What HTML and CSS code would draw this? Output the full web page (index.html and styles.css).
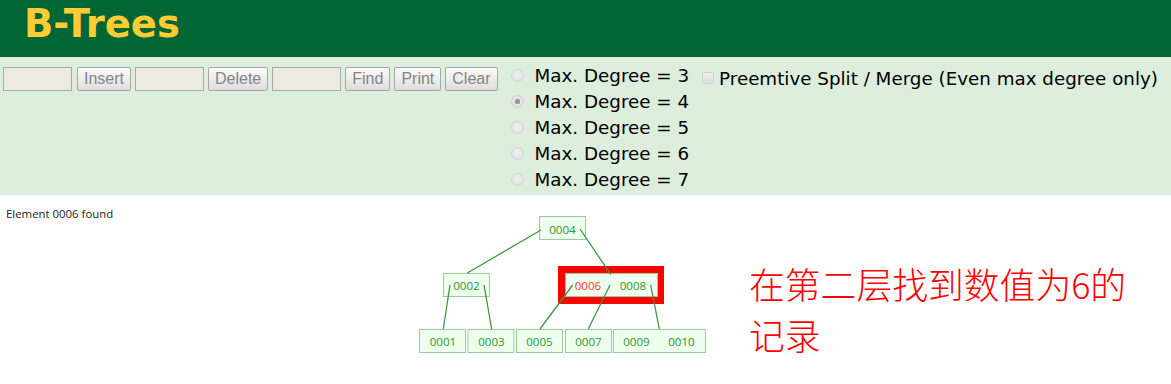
FILE: index.html
```html
<!DOCTYPE html>
<html lang="en">
<head>
<meta charset="utf-8">
<title>B-Trees</title>
<link rel="stylesheet" href="styles.css">
</head>
<body>
<header class="top">
  <h1 class="title">B-Trees</h1>
</header>
<section class="panel">
  <div class="ops">
    <input class="field first" type="text">
    <button class="btn">Insert</button>
    <input class="field" type="text">
    <button class="btn">Delete</button>
    <input class="field" type="text">
    <button class="btn">Find</button>
    <button class="btn">Print</button>
    <button class="btn">Clear</button>
  </div>
  <div class="degrees">
    <label class="opt"><input class="radio" type="radio" name="deg"><span>Max. Degree = 3</span></label>
    <label class="opt"><input class="radio" type="radio" name="deg" checked><span>Max. Degree = 4</span></label>
    <label class="opt"><input class="radio" type="radio" name="deg"><span>Max. Degree = 5</span></label>
    <label class="opt"><input class="radio" type="radio" name="deg"><span>Max. Degree = 6</span></label>
    <label class="opt"><input class="radio" type="radio" name="deg"><span>Max. Degree = 7</span></label>
  </div>
  <label class="preempt"><input class="check" type="checkbox"><span>Preemtive Split / Merge (Even max degree only)</span></label>
</section>
<section class="canvas">
  <p class="msg">Element 0006 found</p>
  <svg class="tree" width="1171" height="189" viewBox="0 0 1171 189" xmlns="http://www.w3.org/2000/svg">
    <rect class="hit" x="558" y="71" width="106" height="38"/>
    <rect class="node" x="539.5" y="21.5" width="46" height="23"/>
    <rect class="node" x="443.5" y="78.5" width="46" height="23"/>
    <rect class="node" x="565.5" y="78.5" width="92" height="23"/>
    <rect class="node" x="419.5" y="134.5" width="46" height="23"/>
    <rect class="node" x="468" y="134.5" width="46" height="23"/>
    <rect class="node" x="516.5" y="134.5" width="46" height="23"/>
    <rect class="node" x="565.5" y="134.5" width="46" height="23"/>
    <rect class="node" x="613.5" y="134.5" width="92" height="23"/>
    <text class="key" x="562.5" y="39">0004</text>
    <text class="key" x="466.5" y="94.5">0002</text>
    <text class="key found" x="588" y="94.5">0006</text>
    <text class="key" x="633" y="94.5">0008</text>
    <text class="key" x="443" y="151">0001</text>
    <text class="key" x="491.5" y="151">0003</text>
    <text class="key" x="539.5" y="151">0005</text>
    <text class="key" x="588.5" y="151">0007</text>
    <text class="key" x="636.5" y="151">0009</text>
    <text class="key" x="681.5" y="151">0010</text>
    <line class="edge" x1="541" y1="35" x2="467.3" y2="78"/>
    <line class="edge" x1="580" y1="34" x2="610.7" y2="79.3"/>
    <line class="edge" x1="450" y1="90" x2="443.3" y2="134"/>
    <line class="edge" x1="484" y1="90" x2="491.7" y2="134"/>
    <line class="edge" x1="572.7" y1="90" x2="540" y2="134"/>
    <line class="edge" x1="610" y1="90" x2="588.3" y2="134"/>
    <line class="edge" x1="650.7" y1="90" x2="659.3" y2="134"/>
  </svg>
  <div class="note">在第二层找到数值为6的记录</div>
</section>
</body>
</html>
```

FILE: styles.css
```css
html, body {
  margin: 0;
  padding: 0;
  background: #ffffff;
}

.top {
  height: 57px;
  background: #006633;
  box-sizing: border-box;
  padding-left: 24px;
}

.title {
  margin: 0;
  font-family: "DejaVu Sans", Verdana, sans-serif;
  font-weight: bold;
  font-size: 38.5px;
  line-height: 47px;
  color: #ffcc33;
}

.panel {
  height: 138px;
  background: #ddeedd;
  display: flex;
  align-items: flex-start;
  box-sizing: border-box;
}

.ops {
  display: flex;
  gap: 4px;
  margin-left: 3px;
  margin-top: 10px;
}

.field {
  width: 69px;
  height: 24px;
  box-sizing: border-box;
  margin: 0;
  border: 1px solid #a9a9a9;
  background: #ebebe4;
  padding: 0 3px;
}

.field.first {
  margin-right: 1px;
}

.btn {
  height: 24px;
  box-sizing: border-box;
  margin: 0;
  padding: 0 6px;
  border: 1px solid #a6a6a6;
  border-radius: 2px;
  background: linear-gradient(#fbfbfb, #dedede);
  font-family: "Liberation Sans", Arial, sans-serif;
  font-size: 16px;
  line-height: 22px;
  color: #858585;
}

.degrees {
  display: flex;
  flex-direction: column;
  margin-left: 13px;
  margin-top: 5px;
}

.opt {
  display: flex;
  align-items: center;
  height: 26px;
  font-family: "DejaVu Sans", Verdana, sans-serif;
  font-size: 18.3px;
  color: #000000;
}

.radio {
  appearance: none;
  -webkit-appearance: none;
  width: 13px;
  height: 13px;
  margin: 0 11px 0 0;
  border: 1px solid #d2d2d2;
  border-radius: 50%;
  background: radial-gradient(circle at 50% 40%, #f2f2f2, #dcdcdc);
  box-sizing: border-box;
  flex: none;
}

.radio:checked {
  background: radial-gradient(circle, #9a9a9a 0 2.5px, #e6e6e6 3px, #dcdcdc);
}

.preempt {
  display: flex;
  align-items: center;
  height: 26px;
  margin-left: 13px;
  margin-top: 8px;
  font-family: "DejaVu Sans", Verdana, sans-serif;
  font-size: 18.3px;
  color: #000000;
}

.check {
  appearance: none;
  -webkit-appearance: none;
  width: 12px;
  height: 12px;
  margin: 0 5px 0 0;
  border: 1px solid #cfcfcf;
  border-radius: 2px;
  background: linear-gradient(#f0f0f0, #dedede);
  box-sizing: border-box;
  flex: none;
}

.canvas {
  position: relative;
  height: 189px;
  overflow: hidden;
}

.msg {
  margin: 0;
  padding: 12px 0 0 6px;
  font-family: "Open Sans", "Noto Sans", sans-serif;
  font-size: 11.4px;
  line-height: 14px;
  color: #222222;
}

.tree {
  position: absolute;
  left: 0;
  top: 0;
}

.hit {
  fill: #ff0000;
}

.node {
  fill: #eeffee;
  stroke: #99cc99;
  stroke-width: 1;
}

.key {
  font-family: "Open Sans", "Noto Sans", sans-serif;
  font-size: 11.6px;
  fill: #2f962f;
  text-anchor: middle;
}

.key.found {
  fill: #ff3333;
}

.edge {
  stroke: #3f973f;
  stroke-width: 1.3;
}

.note {
  position: absolute;
  left: 749px;
  top: 63px;
  width: 385px;
  font-family: "Noto Sans CJK SC", sans-serif;
  font-weight: 300;
  font-size: 35.8px;
  line-height: 51px;
  color: #ff0000;
}
```
